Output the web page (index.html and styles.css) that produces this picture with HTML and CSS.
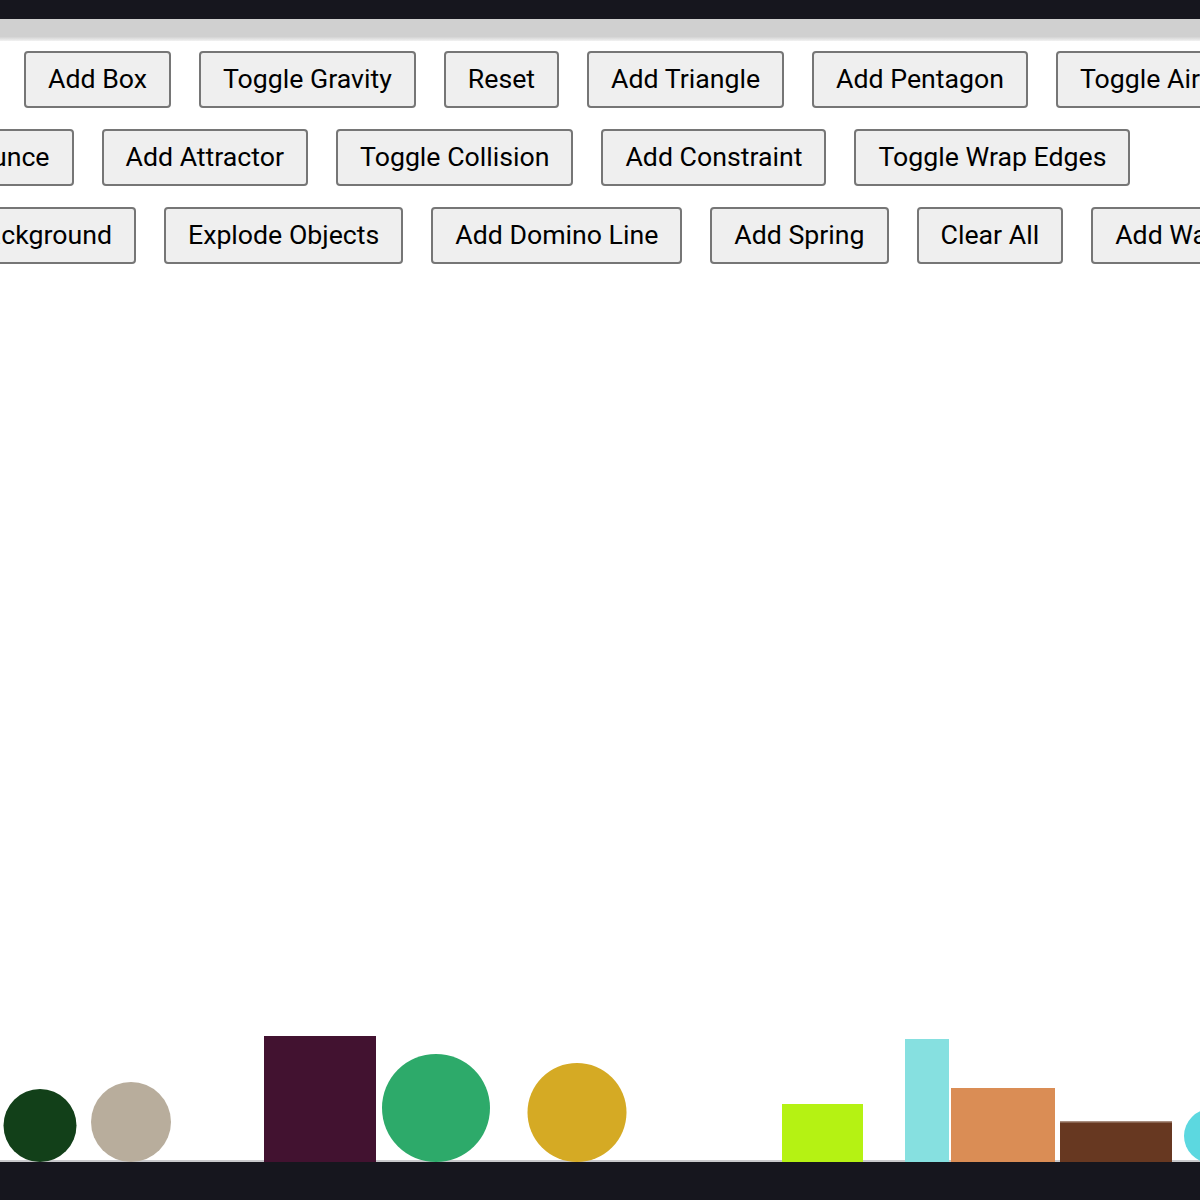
FILE: index.html
```html
<!DOCTYPE html>
<html lang="en">
<head>
    <meta charset="UTF-8">
    <title>Physics Playground</title>
    <link rel="stylesheet" href="styles.css">
</head>
<body>
    <div class="topbar"></div>
    <div class="tabbar"></div>

    <div class="toolbar">
        <div class="row row-1">
            <button>Add Box</button>
            <button>Toggle Gravity</button>
            <button>Reset</button>
            <button>Add Triangle</button>
            <button>Add Pentagon</button>
            <button>Toggle Air Resistance</button>
        </div>
        <div class="row row-2">
            <button>Toggle Bounce</button>
            <button>Add Attractor</button>
            <button>Toggle Collision</button>
            <button>Add Constraint</button>
            <button>Toggle Wrap Edges</button>
        </div>
        <div class="row row-3">
            <button>Toggle Background</button>
            <button>Explode Objects</button>
            <button>Add Domino Line</button>
            <button>Add Spring</button>
            <button>Clear All</button>
            <button>Add Wall</button>
        </div>
    </div>

    <div class="stage">
        <svg class="world" width="1200" height="200" viewBox="0 0 1200 200">
            <rect x="0" y="198" width="1200" height="2" fill="#c9c9cc"/>
            <circle cx="40" cy="163.5" r="36.5" fill="#124019"/>
            <circle cx="131" cy="160" r="40" fill="#b8ad9c"/>
            <rect x="264" y="74" width="112" height="126" fill="#421230"/>
            <circle cx="436" cy="146" r="54" fill="#2daa6a"/>
            <circle cx="577" cy="150.5" r="49.5" fill="#d5aa24"/>
            <rect x="782" y="142" width="81" height="58" fill="#b5f213"/>
            <rect x="905" y="77" width="44" height="123" fill="#86e0e0"/>
            <rect x="951" y="126" width="104" height="74" fill="#da8d55"/>
            <rect x="1060" y="159" width="112" height="41" fill="#673821"/>
            <rect x="1060" y="159" width="112" height="1.5" fill="#a98e80"/>
            <circle cx="1211" cy="174" r="27" fill="#5cd8e0"/>
        </svg>
    </div>

    <div class="footer"></div>
</body>
</html>
```

FILE: styles.css
```css
html, body {
    margin: 0;
    padding: 0;
}
body {
    font-family: Roboto, "Liberation Sans", sans-serif;
    background: #ffffff;
    height: 1200px;
    display: flex;
    flex-direction: column;
    overflow: hidden;
}
.topbar {
    height: 19px;
    background: #16161e;
    flex-shrink: 0;
}
.tabbar {
    height: 22px;
    background: linear-gradient(#d0d0d0 80%, #f2f2f2);
    flex-shrink: 0;
}
.toolbar {
    display: flex;
    flex-direction: column;
    gap: 21px;
    padding-top: 10px;
    overflow: hidden;
    flex-shrink: 0;
}
.row {
    display: flex;
    gap: 28px;
    white-space: nowrap;
}
.row-1 {
    margin-left: 24px;
}
.row-2 {
    margin-left: -151px;
}
.row-3 {
    margin-left: -141px;
}
button {
    flex-shrink: 0;
    height: 57px;
    padding: 0 22px 1px;
    font-family: Roboto, "Liberation Sans", sans-serif;
    font-size: 26.7px;
    color: #000000;
    background: #efefef;
    border: 2px solid #767676;
    border-radius: 4px;
}
.stage {
    flex: 1;
    display: flex;
    flex-direction: column;
    justify-content: flex-end;
}
.world {
    display: block;
}
.footer {
    height: 38px;
    background: #16161e;
    flex-shrink: 0;
}
```
